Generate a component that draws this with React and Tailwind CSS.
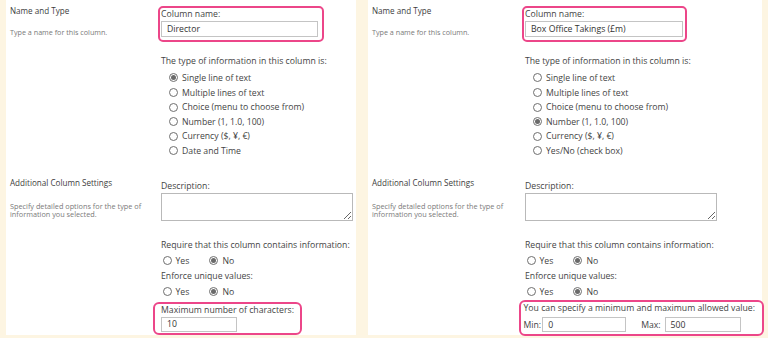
import React from 'react';

function Radio({ checked }) {
  return (
    <span className="w-[9px] h-[9px] rounded-full border border-[#6f6f6f] bg-white flex items-center justify-center shrink-0">
      {checked && <span className="w-[5px] h-[5px] rounded-full bg-[#6a6a6a]" />}
    </span>
  );
}

function RadioRow({ label, checked }) {
  return (
    <div className="h-[14.6px] flex items-center gap-[4px] pl-[8px]">
      <Radio checked={checked} />
      <span>{label}</span>
    </div>
  );
}

function YesNo() {
  return (
    <div className="h-[14px] flex items-center pl-[1.5px]">
      <Radio />
      <span className="ml-[4px]">Yes</span>
      <span className="ml-[20px]">
        <Radio checked />
      </span>
      <span className="ml-[4px]">No</span>
    </div>
  );
}

function LeftInfo() {
  return (
    <div className="w-full pl-[4px] pt-[6px]">
      <div className="text-[8.1px] leading-[10px] text-[#3d3d3d]">Name and Type</div>
      <div className="mt-[11.5px] text-[7.2px] leading-[9px] text-[#7a7a7a]">Type a name for this column.</div>
      <div className="mt-[141.5px] text-[8.1px] leading-[10px] text-[#3d3d3d]">Additional Column Settings</div>
      <div className="mt-[13.5px] text-[7.3px] leading-[8.5px] text-[#7a7a7a]">
        Specify detailed options for the type of
        <br />
        information you selected.
      </div>
    </div>
  );
}

function Panel({ width, leftWidth, boxWidth, inputWidth, name, types, selected, extra }) {
  return (
    <div className="bg-white h-[335px] flex shrink-0" style={{ width }}>
      <div className="shrink-0" style={{ width: leftWidth }}>
        <LeftInfo />
      </div>
      <div className="flex-1 text-[8.7px] leading-[12px] text-[#444]">
        <div
          className="mt-[6px] -ml-[3px] border-2 border-[#ec4689] rounded-[5px] pl-[1px] pt-[0px] pb-[3px]"
          style={{ width: boxWidth }}
        >
          <div>Column name:</div>
          <div
            className="mt-[1px] h-[16px] border border-[#c4c4c4] flex items-center pl-[5px] text-[#333]"
            style={{ width: inputWidth }}
          >
            {name}
          </div>
        </div>
        <div className="mt-[13px]">The type of information in this column is:</div>
        <div className="mt-[3.7px]">
          {types.map((t) => (
            <RadioRow key={t} label={t} checked={t === selected} />
          ))}
        </div>
        <div className="mt-[21.7px]">Description:</div>
        <textarea
          className="mt-[1px] block w-[192px] h-[28px] border border-[#b9b9b9] resize-y outline-none"
          defaultValue=""
        />
        <div className="mt-[18px]">Require that this column contains information:</div>
        <div className="mt-[2.7px]">
          <YesNo />
        </div>
        <div className="mt-[2.3px]">Enforce unique values:</div>
        <div className="mt-[3px]">
          <YesNo />
        </div>
        {extra}
      </div>
    </div>
  );
}

export default function App() {
  const baseTypes = [
    'Single line of text',
    'Multiple lines of text',
    'Choice (menu to choose from)',
    'Number (1, 1.0, 100)',
    'Currency ($, ¥, €)',
  ];

  return (
    <div
      className="w-[768px] h-[338px] bg-[#fdf5e2] flex gap-[12px] pl-[6px] overflow-hidden"
      style={{ fontFamily: '"Open Sans", "Noto Sans", sans-serif' }}
    >
      <Panel
        width={350}
        leftWidth={155}
        boxWidth={166}
        inputWidth={157}
        name="Director"
        types={[...baseTypes, 'Date and Time']}
        selected="Single line of text"
        extra={
          <div className="mt-[3px] -ml-[8px] w-[149px] border-2 border-[#ec4689] rounded-[6px] pl-[6px] pt-[0.5px] pb-[1px]">
            <div>Maximum number of characters:</div>
            <div className="mt-[0.5px] w-[76px] h-[15px] border border-[#c4c4c4] flex items-center pl-[5px] text-[#333]">
              10
            </div>
          </div>
        }
      />
      <Panel
        width={394}
        leftWidth={157}
        boxWidth={165}
        inputWidth={158}
        name="Box Office Takings (£m)"
        types={[...baseTypes, 'Yes/No (check box)']}
        selected="Number (1, 1.0, 100)"
        extra={
          <div className="mt-[1px] -ml-[6px] w-[245px] border-2 border-[#ec4689] rounded-[6px] pl-[2.5px] pb-[2px]">
            <div>You can specify a minimum and maximum allowed value:</div>
            <div className="mt-[3px] flex items-center">
              <span>Min:</span>
              <div className="ml-[1px] w-[84px] h-[15.5px] border border-[#c4c4c4] flex items-center pl-[5px] text-[#333]">
                0
              </div>
              <span className="ml-[15px]">Max:</span>
              <div className="ml-[4px] w-[76px] h-[15.5px] border border-[#c4c4c4] flex items-center pl-[5px] text-[#333]">
                500
              </div>
            </div>
          </div>
        }
      />
    </div>
  );
}
